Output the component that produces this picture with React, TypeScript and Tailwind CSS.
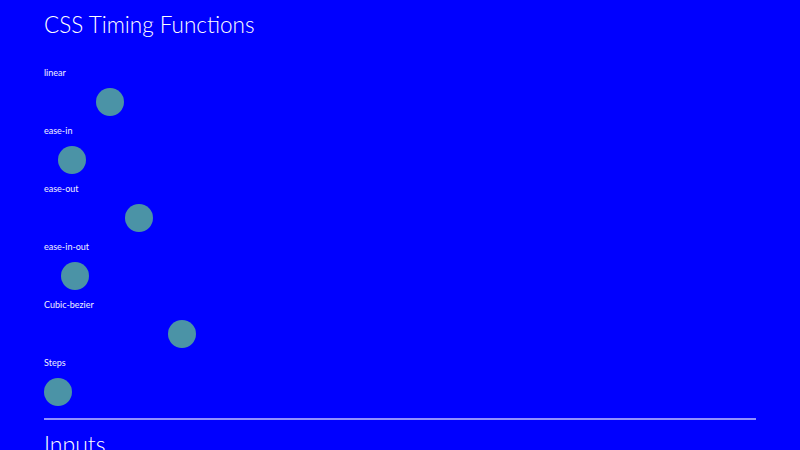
import React from "react";

type Row = { label: string; offset: number };

// Snapshot of each animated ball's position along its track
const rows: Row[] = [
  { label: "linear", offset: 52 },
  { label: "ease-in", offset: 14 },
  { label: "ease-out", offset: 81 },
  { label: "ease-in-out", offset: 17 },
  { label: "Cubic-bezier", offset: 124 },
  { label: "Steps", offset: 0 },
];

export default function App() {
  return (
    <div
      className="min-h-[450px] w-full bg-[#0000ff] text-white overflow-hidden"
      style={{ fontFamily: "Lato, 'Open Sans', sans-serif" }}
    >
      <div className="mx-[44px] pt-[10px]">
        <h1 className="text-[22.5px] leading-[30px] font-light">CSS Timing Functions</h1>
        <div className="mt-[26px] flex flex-col">
          {rows.map((r) => (
            <div key={r.label} className="pb-[8px]">
              <div className="text-[9px] leading-[14px] text-[#f0f0ff]">{r.label}</div>
              <div className="mt-[8px] h-[28px]">
                <div
                  className="h-[28px] w-[28px] rounded-full bg-[#4b93a6]"
                  style={{ transform: `translateX(${r.offset}px)` }}
                />
              </div>
            </div>
          ))}
        </div>
        <hr className="mt-[4px] border-0 h-[2px] bg-[#8f8fff]" />
        <h2 className="mt-[9px] text-[23px] leading-[30px] font-light">Inputs</h2>
      </div>
    </div>
  );
}
